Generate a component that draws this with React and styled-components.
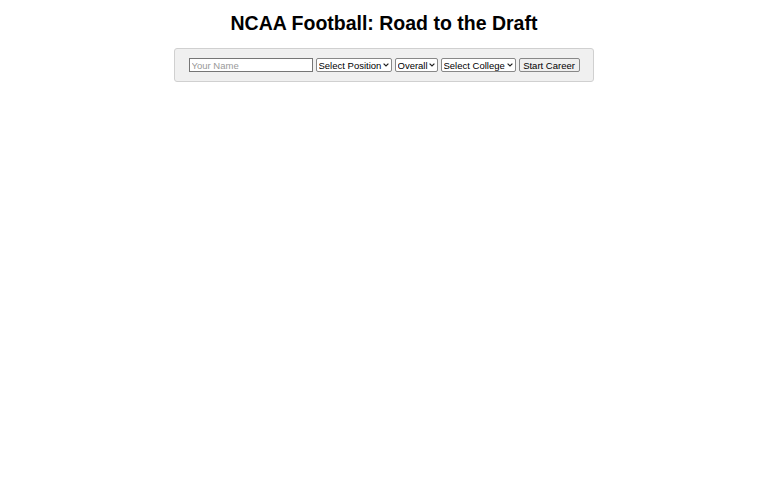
import React from 'react'
import styled, { createGlobalStyle } from 'styled-components'

const Global = createGlobalStyle`
  body {
    margin: 8px;
    background: #fff;
    font-family: "Liberation Sans", Arial, sans-serif;
    color: #000;
  }
  * { box-sizing: border-box; }
`

const chevron =
  "url(\"data:image/svg+xml,%3Csvg xmlns='http://www.w3.org/2000/svg' width='6' height='4' viewBox='0 0 6 4'%3E%3Cpath d='M0.6 0.6 L3 3 L5.4 0.6' fill='none' stroke='%23222' stroke-width='1.2'/%3E%3C/svg%3E\")"

const Title = styled.h1`
  text-align: center;
  font-size: 19.5px;
  font-weight: bold;
  margin: 4px 0 13px;
`

const Panel = styled.div`
  width: 420px;
  margin: 0 auto;
  padding: 9px;
  background: #f0f0f0;
  border: 1px solid #d0d0d0;
  border-radius: 3px;
  display: flex;
  justify-content: center;
  align-items: center;
  gap: 3px;
`

const NameInput = styled.input`
  width: 124px;
  height: 14px;
  padding: 0 2px;
  font-family: inherit;
  font-size: 9.5px;
  border: 1px solid #767676;
  background: #fff;
  outline: none;
  &::placeholder { color: #999; }
`

const Select = styled.select`
  appearance: none;
  width: ${p => p.$w}px;
  height: 14px;
  font-family: inherit;
  font-size: 9.5px;
  border: 1px solid #888;
  border-radius: 2px;
  background: #fff ${chevron} no-repeat right 2px center;
  color: #000;
  padding: 0 8px 0 2px;
`

const Button = styled.button`
  width: 61px;
  height: 14px;
  white-space: nowrap;
  font-family: inherit;
  font-size: 9.5px;
  padding: 0;
  border: 1px solid #888;
  border-radius: 2px;
  background: #efefef;
  color: #000;
`

export default function App() {
  return (
    <>
      <Global />
      <Title>NCAA Football: Road to the Draft</Title>
      <Panel>
        <NameInput placeholder="Your Name" />
        <Select $w={76} defaultValue="">
          <option value="">Select Position</option>
        </Select>
        <Select $w={43} defaultValue="">
          <option value="">Overall</option>
        </Select>
        <Select $w={75} defaultValue="">
          <option value="">Select College</option>
        </Select>
        <Button>Start Career</Button>
      </Panel>
    </>
  )
}
